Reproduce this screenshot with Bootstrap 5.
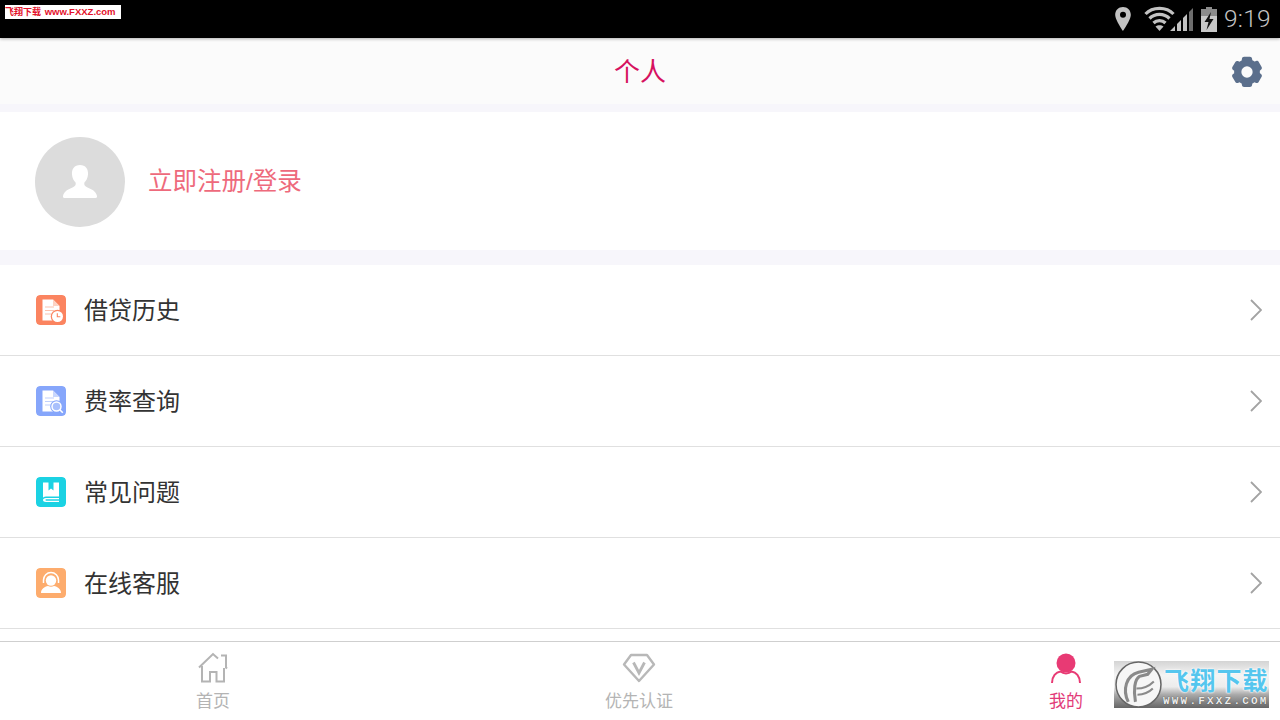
<!DOCTYPE html>
<html lang="zh">
<head>
<meta charset="utf-8">
<title>个人</title>
<link href="https://cdn.jsdelivr.net/npm/bootstrap@5.3.0/dist/css/bootstrap.min.css" rel="stylesheet">
<style>
html,body{height:720px;overflow:hidden;background:#fff}
body{font-family:"Liberation Sans","Noto Sans CJK SC",sans-serif}
.app-shell{height:720px}
.status-strip{height:38px;background:#000;padding-left:5px;position:relative;z-index:2;box-shadow:0 1px 3px rgba(0,0,0,.3)}
.wm-tag{display:block;margin-top:5px;width:116px;height:14px;background:#fff;color:#e3102a;font-size:9px;line-height:14px;font-weight:700;white-space:nowrap;padding-left:0}
.wm-latin{font-size:9.5px;margin-left:1px}
.status-right{height:38px;padding-right:9px}
.pin-icon{margin-right:12px}
.bat-icon{margin-left:7px}
.clock{font-family:"Roboto",sans-serif;font-weight:300;font-size:24.5px;line-height:38px;margin-left:7px;letter-spacing:.3px;color:#c4c4c4}
.head-bar{height:66px;background:#fbfbfb;position:relative}
.head-title{font-size:26px;color:#d6125f;line-height:68px}
.gear-btn{position:absolute;right:17px;top:18px;line-height:0}
.gap-a{height:8px;background:#f7f6fb}
.gap-b{height:15px;background:#f7f6fb}
.profile-box{height:138px;padding-left:35px}
.avatar-disc{width:90px;height:90px;border-radius:50%;background:#dcdcdc;margin-top:1px}
.reg-link{font-size:24.5px;color:#ee6a7c;margin-left:23px;line-height:1;margin-top:2px}
.menu-row{height:91px;border-bottom:1px solid #e0e0e0;padding:0 18px 0 36px;background:#fff}
.menu-label{font-size:24px;color:#333;margin-left:18px;line-height:1;padding-top:2px}
.tile{width:30px;height:30px;border-radius:4px;display:block;flex:none}
.fill-space{flex:1 1 auto;background:#fff}
.tab-bar{height:79px;border-top:1px solid #cfcfcf;background:#fff;position:relative}
.tab-cell{width:120px;position:absolute;top:10px;text-align:center}
.tab-cell svg{display:block;margin:0 auto}
.tab-text{font-size:17px;line-height:1;margin-top:9px;color:#b4b4b4;display:block}
.tab-on{color:#e23a78}
.tab-home{left:153px}.tab-vip{left:579px}.tab-me{left:1006px}
.fxxz-logo{position:absolute;left:1114px;top:19px;width:155px;height:47px;background:linear-gradient(#d4d4d4,#f4f4f4 30%,#ececec 55%,#a8a8a8 72%,#666);overflow:hidden}
.fxxz-cn{position:absolute;left:50px;top:6px;font-size:25px;font-weight:700;line-height:28px;color:#55c6ee;letter-spacing:1.2px;white-space:nowrap;text-shadow:0 0 2px #fff,0 0 2px #fff}
.fxxz-en{position:absolute;left:49px;top:34px;font-size:11px;font-weight:700;line-height:13px;color:#ececec;letter-spacing:2.2px;white-space:nowrap;font-family:"Liberation Mono",monospace;text-shadow:0 0 1px #333}
.fxxz-ring{position:absolute;left:1px;top:0}
</style>
</head>
<body>
<div class="app-shell d-flex flex-column">
  <div class="status-strip d-flex justify-content-between align-items-start">
    <span class="wm-tag">飞翔下载<span class="wm-latin"> www.FXXZ.com</span></span>
    <div class="status-right d-flex align-items-center">
      <svg class="pin-icon" width="18" height="26" viewBox="0 0 18 26"><path fill="#c2c2c2" fill-rule="evenodd" d="M9 1C4.500 1 1.200 4.300 1.200 8.800 1.200 14 9 25 9 25s7.800-11 7.800-16.200C16.800 4.300 13.500 1 9 1zm0 10.700a3 3 0 1 1 0-6 3 3 0 0 1 0 6z"/></svg>
      <svg width="50" height="26" viewBox="0 0 50 26"><g fill="none" stroke="#c2c2c2" stroke-width="3.200"><path d="M1.500 8C8.500.500 22.500.500 29.500 8"/><path d="M5.500 12.500c5.500-5.500 14.500-5.500 20 0"/><path d="M9.500 17c3.200-3.200 8.800-3.200 12 0"/></g><path fill="#c2c2c2" d="M15.500 25l-4-4.500c2.200-1.800 5.800-1.800 8 0z"/><path fill="#c2c2c2" d="M26 25l5-5v5zM33 25v-7l4-4v11zM39 25V12l4-4v17z"/><path fill="#6e6e6e" d="M45 25V6l4-4v23z"/></svg>
      <svg class="bat-icon" width="16" height="25" viewBox="0 0 16 25"><path fill="#8c8c8c" d="M5 0h6v2h5v7H0V2h5z"/><path fill="#c8c8c8" d="M0 9h16v16H0z"/><path fill="#111" d="M10 5 3.500 15H7.500L5.500 23 12.500 12H8.500z"/></svg>
      <span class="clock">9:19</span>
    </div>
  </div>
  <div class="head-bar text-center">
    <span class="head-title">个人</span>
    <span class="gear-btn">
      <svg width="32" height="32" viewBox="0 0 30 30"><path fill="#5b6f8c" fill-rule="evenodd" d="M12.200.8h5.600c1 0 1.700.7 1.900 1.600l.3 1.700c.7.300 1.300.7 1.900 1.100l1.700-.6c.9-.3 1.900.1 2.300.9l2.800 4.800c.5.800.3 1.800-.4 2.400l-1.300 1.100c.1.700.1 1.500 0 2.200l1.300 1.100c.7.600.9 1.600.4 2.400L25.900 24.400c-.4.800-1.400 1.200-2.300.9l-1.700-.6c-.6.400-1.200.8-1.900 1.100l-.3 1.700c-.2.900-.9 1.600-1.900 1.600h-5.600c-1 0-1.700-.7-1.900-1.600l-.3-1.700c-.7-.3-1.300-.7-1.900-1.100l-1.700.6c-.9.300-1.900-.1-2.300-.9L1.300 19.600c-.5-.8-.3-1.800.4-2.400L3 16.100c-.1-.7-.1-1.500 0-2.200L1.700 12.800c-.7-.6-.9-1.600-.4-2.400L4.100 5.600c.4-.8 1.400-1.200 2.300-.9l1.700.6c.6-.4 1.200-.8 1.900-1.100l.3-1.800C10.500 1.500 11.200.8 12.200.8zM15 9.700a5.300 5.300 0 1 0 0 10.600 5.300 5.300 0 0 0 0-10.600z"/></svg>
    </span>
  </div>
  <div class="gap-a"></div>
  <div class="profile-box d-flex align-items-center">
    <div class="avatar-disc d-flex align-items-center justify-content-center">
      <svg width="36" height="36" viewBox="0 0 36 36"><path fill="#fff" d="M18 1c-5.500 0-8.500 4-8 9.500.3 3.500 1.700 6.300 3.600 8 .6 2-.3 3.700-2.600 4.800C7 25 2 27 1 32c-.2 1 .2 2 1.500 2h31c1.300 0 1.700-1 1.500-2-1-5-6-7-10-8.700-2.300-1.100-3.200-2.800-2.600-4.800 1.900-1.700 3.300-4.500 3.600-8C26.500 5 23.500 1 18 1z"/></svg>
    </div>
    <span class="reg-link">立即注册/登录</span>
  </div>
  <div class="gap-b"></div>

  <div class="menu-row d-flex align-items-center">
    <svg class="tile" viewBox="0 0 30 30"><rect width="30" height="30" rx="4" fill="#fb8460"/><path fill="#fff" d="M6.500 4.500h10.500l6.500 6.500v14.500h-17z"/><path fill="#fdd3c4" d="M17 4.500l6.500 6.500H17z"/><path stroke="#fcc3af" stroke-width="1.200" d="M9 12h9M9 15.500h9M9 19h6"/><circle cx="21.500" cy="21.500" r="6.800" fill="#fb8460"/><circle cx="21.500" cy="21.500" r="5.500" fill="#fff"/><path fill="none" stroke="#fb8460" stroke-width="1.100" d="M21.300 18.300v3.500h3"/></svg>
    <span class="menu-label">借贷历史</span>
    <svg class="ms-auto" width="12" height="22" viewBox="0 0 12 22"><path fill="none" stroke="#a3a3a3" stroke-width="1.800" d="M1 1l10 10L1 21"/></svg>
  </div>
  <div class="menu-row d-flex align-items-center">
    <svg class="tile" viewBox="0 0 30 30"><rect width="30" height="30" rx="4" fill="#86a6fb"/><path fill="#fff" d="M6.500 4.500h10.500l6.500 6.500v14.500h-17z"/><path fill="#c9d7fd" d="M17 4.500l6.500 6.500H17z"/><path stroke="#c0d0fd" stroke-width="1.200" d="M9 12h9M9 15.500h9M9 19h6"/><circle cx="20.500" cy="20.500" r="6.300" fill="#86a6fb"/><circle cx="20.500" cy="20.500" r="4.500" fill="#a9c0fc" stroke="#fff" stroke-width="1.500"/><path stroke="#fff" stroke-width="1.600" d="M23.800 23.800l3 3"/></svg>
    <span class="menu-label">费率查询</span>
    <svg class="ms-auto" width="12" height="22" viewBox="0 0 12 22"><path fill="none" stroke="#a3a3a3" stroke-width="1.800" d="M1 1l10 10L1 21"/></svg>
  </div>
  <div class="menu-row d-flex align-items-center">
    <svg class="tile" viewBox="0 0 30 30"><rect width="30" height="30" rx="4" fill="#1bd2e3"/><path fill="#fff" fill-rule="evenodd" d="M7 5.500h5.500v8l2.500-2 2.500 2v-8H23v14H10c-1.800 0-3 1-3 1.500zM10 21h13v1.200H10.200c-1 0-1 1.500 0 1.500H23V25H10c-2 0-3-1-3-2s1-2 3-2z"/></svg>
    <span class="menu-label">常见问题</span>
    <svg class="ms-auto" width="12" height="22" viewBox="0 0 12 22"><path fill="none" stroke="#a3a3a3" stroke-width="1.800" d="M1 1l10 10L1 21"/></svg>
  </div>
  <div class="menu-row d-flex align-items-center">
    <svg class="tile" viewBox="0 0 30 30"><rect width="30" height="30" rx="4" fill="#fdac6d"/><circle cx="15" cy="12.500" r="5.200" fill="#fff"/><path fill="none" stroke="#fff" stroke-width="1.500" d="M7.500 15v-3a7.500 7.500 0 0 1 15 0v3"/><path fill="#fff" d="M5 25c0-4 3.500-6.500 7-7 1.800.9 4.200.9 6 0 3.500.5 7 3 7 7z"/></svg>
    <span class="menu-label">在线客服</span>
    <svg class="ms-auto" width="12" height="22" viewBox="0 0 12 22"><path fill="none" stroke="#a3a3a3" stroke-width="1.800" d="M1 1l10 10L1 21"/></svg>
  </div>
  <div class="fill-space"></div>

  <div class="tab-bar">
    <div class="tab-cell tab-home">
      <svg width="30" height="32" viewBox="0 0 30 32"><path fill="none" stroke="#b4b4b4" stroke-width="2" d="M1 15.500 15 2l5 4.500M23 3.500h5v5M28 8.500V15.500l1 1M4 14v15.500h8V20h6.500v9.500H26V16"/></svg>
      <span class="tab-text">首页</span>
    </div>
    <div class="tab-cell tab-vip">
      <svg width="34" height="32" viewBox="0 0 34 32"><path fill="none" stroke="#b8b8b8" stroke-width="2.400" stroke-linejoin="round" d="M9 3h16l7 9.500L17 29 2 12.500z"/><path fill="none" stroke="#b8b8b8" stroke-width="2.800" d="M11.500 10.500 17 21l5.500-10.500"/></svg>
      <span class="tab-text">优先认证</span>
    </div>
    <div class="tab-cell tab-me">
      <svg width="30" height="32" viewBox="0 0 30 32"><circle cx="15" cy="11" r="9.500" fill="#e83a74"/><path fill="none" stroke="#e83a74" stroke-width="2" d="M1 31c0-7 4-11 8.500-11.500 3 2.500 8 2.500 11 0C25 20 29 24 29 31"/></svg>
      <span class="tab-text tab-on">我的</span>
    </div>
    <div class="fxxz-logo">
      <svg class="fxxz-ring" width="47" height="47" viewBox="0 0 46 46"><circle cx="23" cy="23" r="22" fill="#f6f6f6" stroke="#666" stroke-width="1.500"/><path fill="none" stroke="#8a8a8a" stroke-width="3" d="M13 40C7 28 11 14 23 11l13-3-4 5-8 2c-5 3-6 14-4 25"/><path fill="none" stroke="#8a8a8a" stroke-width="2" d="M21 27c6 0 12-2 17-7M22 33c6 0 11-2 15-6"/></svg>
      <span class="fxxz-cn">飞翔下载</span>
      <span class="fxxz-en">WWW.FXXZ.COM</span>
    </div>
  </div>
</div>
<script src="https://cdn.jsdelivr.net/npm/bootstrap@5.3.0/dist/js/bootstrap.bundle.min.js"></script>
</body>
</html>
